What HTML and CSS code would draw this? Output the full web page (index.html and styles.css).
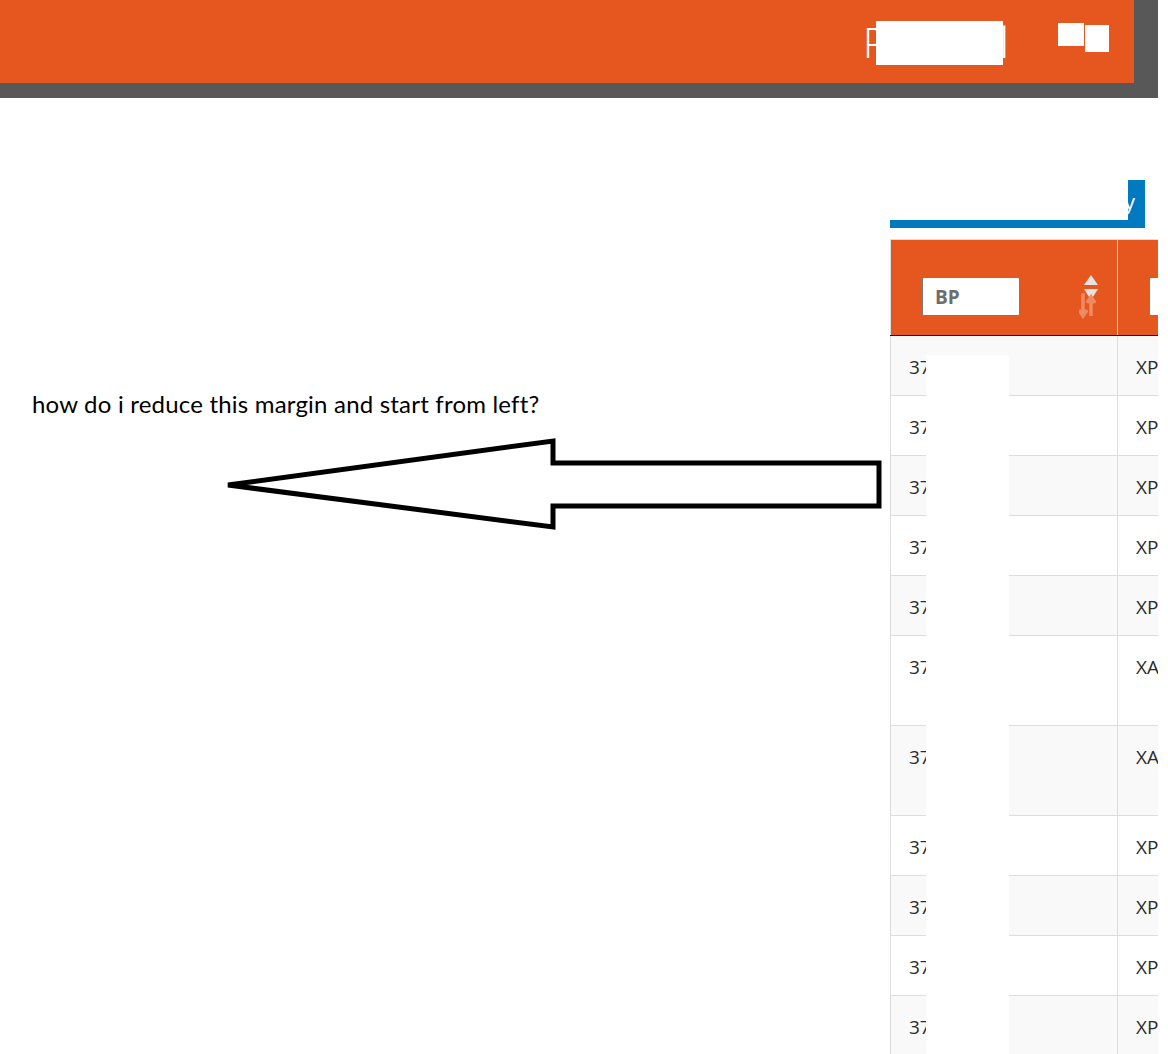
FILE: index.html
```html
<!DOCTYPE html>
<html lang="en">
  <head>
    <meta charset="UTF-8" />
    <title>Portal</title>
    <link rel="stylesheet" href="styles.css">
  </head>
  <body>
    <div class="page">
      <div class="topbar">
        <div class="topbar-inner">
          <span class="brand">Portal</span>
          <div class="user-icons">
            <span class="icon-a"></span>
            <span class="icon-b"></span>
          </div>
          <span class="hide-brand"></span>
        </div>
      </div>

      <div class="main">
        <div class="note">
          <p>how do i reduce this margin and start from left?</p>
        </div>

        <div class="panel">
          <div class="tab">
            <span class="tab-label">Summary</span>
            <span class="tab-hide"></span>
          </div>

          <div class="grid-wrap">
            <table class="grid">
              <thead>
                <tr>
                  <th class="col-bp">
                    <div class="th-inner">
                      <input type="text" class="filter" value="BP" />
                      <svg class="sort" width="28" height="44" viewBox="0 0 28 44">
                        <path d="M12 0 L19 10 L5 10 Z" fill="#e3e3e3" />
                        <path d="M5 14 L19 14 L12 25 Z" fill="#e3e3e3" />
                        <path d="M4 18 L4 41 M0 35 L4 41 L8 35" stroke="#ef8a63" stroke-width="3.5" fill="none" />
                        <path d="M12 41 L12 22 M8 28 L12 22 L16 28" stroke="#ef8a63" stroke-width="3.5" fill="none" />
                      </svg>
                    </div>
                  </th>
                  <th class="col-next">
                    <div class="th-inner">
                      <input type="text" class="filter" value="" />
                    </div>
                  </th>
                </tr>
              </thead>
              <tbody>
                <tr><td>370128</td><td>XPD-220</td></tr>
                <tr><td>370129</td><td>XPD-221</td></tr>
                <tr><td>370130</td><td>XPD-224</td></tr>
                <tr><td>370131</td><td>XPD-230</td></tr>
                <tr><td>370132</td><td>XPD-231</td></tr>
                <tr class="tall"><td>370133</td><td>XAB-102</td></tr>
                <tr class="tall"><td>370134</td><td>XAB-105</td></tr>
                <tr><td>370135</td><td>XPD-240</td></tr>
                <tr><td>370136</td><td>XPD-241</td></tr>
                <tr><td>370137</td><td>XPD-245</td></tr>
                <tr><td>370138</td><td>XPD-250</td></tr>
              </tbody>
            </table>
            <span class="col-hide"></span>
          </div>
        </div>
      </div>

      <svg class="arrow" width="900" height="560" viewBox="0 0 900 560">
        <polygon points="228,485 553,441 553,463 879,463 879,506 553,506 553,527"
          fill="none" stroke="#000" stroke-width="5" stroke-linejoin="miter" />
      </svg>
    </div>
  </body>
</html>
```

FILE: styles.css
```css
html,
body {
  margin: 0;
  padding: 0;
  background-color: #fff;
  overflow: hidden;
}
.page {
  position: relative;
  width: 1158px;
  height: 1054px;
  overflow: hidden;
  font-family: "Open Sans", Arial, sans-serif;
}
.topbar {
  width: 1158px;
  height: 98px;
  background-color: #585858;
}
.topbar-inner {
  position: relative;
  width: 1134px;
  height: 83px;
  background-color: #e6561f;
  display: flex;
  align-items: center;
  justify-content: flex-end;
  padding-right: 25px;
  box-sizing: border-box;
}
.brand {
  color: #fff;
  font-size: 42px;
  font-weight: 300;
  line-height: 1;
  margin-right: 42px;
  letter-spacing: 7px;
}
.hide-brand {
  position: absolute;
  left: 876px;
  top: 21px;
  width: 127px;
  height: 44px;
  background-color: #fff;
}
.user-icons {
  position: relative;
  width: 51px;
  height: 30px;
}
.icon-a {
  position: absolute;
  left: 0;
  top: -4px;
  width: 26px;
  height: 23px;
  background-color: #fff;
}
.icon-b {
  position: absolute;
  left: 27px;
  top: -2px;
  width: 24px;
  height: 27px;
  background-color: #fff;
}
.main {
  display: flex;
}
.note {
  width: 890px;
  flex-shrink: 0;
  padding-left: 32px;
  padding-top: 291px;
  box-sizing: border-box;
}
.note p {
  margin: 0;
  font-family: Lato, "Open Sans", sans-serif;
  font-size: 24px;
  letter-spacing: 0.2px;
  color: #000;
}
.panel {
  padding-top: 82px;
}
.tab {
  position: relative;
  width: 255px;
  height: 48px;
  background-color: #0079c1;
  color: #fff;
  font-size: 22px;
  text-align: right;
  box-sizing: border-box;
  padding: 6px 10px 0 0;
}
.tab-hide {
  position: absolute;
  left: 0;
  top: 0;
  width: 238px;
  height: 40px;
  background-color: #fff;
}
.grid-wrap {
  position: relative;
  margin-top: 11px;
  width: 600px;
}
.grid {
  border-collapse: collapse;
  width: 600px;
  table-layout: fixed;
  font-size: 19px;
  color: #2b2b2b;
}
.grid th {
  background-color: #e6561f;
  height: 96px;
  box-sizing: border-box;
  border-top: 1px solid #ddd;
  border-left: 1px solid #ddd;
  border-bottom: 1px solid #151515;
  padding: 18px 0 0 0;
  text-align: left;
  vertical-align: middle;
}
.col-bp {
  width: 227px;
}
.th-inner {
  display: flex;
  align-items: center;
  justify-content: space-between;
  padding: 0 10px 0 31px;
}
.filter {
  width: 98px;
  height: 39px;
  box-sizing: border-box;
  border: 1px solid #7a7a7a;
  border-radius: 2px;
  padding: 0 12px;
  font-family: "Open Sans", Arial, sans-serif;
  font-size: 19px;
  font-weight: bold;
  color: #6d6d6d;
  background-color: #fff;
}
.col-next .filter {
  width: 200px;
}
.sort {
  display: block;
}
.grid td {
  height: 60px;
  box-sizing: border-box;
  border-left: 1px solid #ddd;
  border-bottom: 1px solid #ddd;
  padding: 18px 18px 0 18px;
  vertical-align: top;
  line-height: 26px;
  white-space: nowrap;
  overflow: hidden;
}
.grid tbody tr:nth-child(odd) {
  background-color: #f9f9f9;
}
.grid tr.tall td {
  height: 90px;
}
.col-hide {
  position: absolute;
  left: 36px;
  top: 116px;
  width: 83px;
  height: 800px;
  background-color: #fff;
}
.arrow {
  position: absolute;
  left: 0;
  top: 0;
}
```
